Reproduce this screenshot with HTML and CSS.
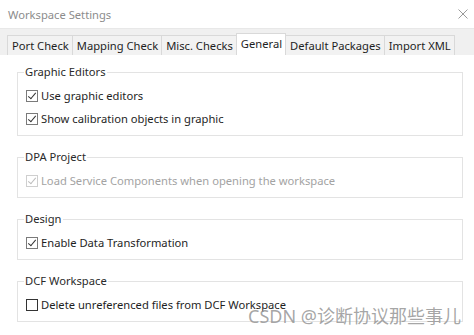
FILE: index.html
```html
<!DOCTYPE html>
<html>
<head>
<meta charset="utf-8">
<link rel="stylesheet" href="styles.css">
</head>
<body>
<div class="window">
  <div class="titlebar">
    <span class="title">Workspace Settings</span>
    <svg class="close" width="10" height="10" viewBox="0 0 10 10"><path d="M0.5 0.5L9.5 9.5M9.5 0.5L0.5 9.5" stroke="#9a9a9a" stroke-width="1" fill="none"/></svg>
  </div>
  <div class="tabstrip">
    <div class="tab">Port Check</div>
    <div class="tab">Mapping Check</div>
    <div class="tab">Misc. Checks</div>
    <div class="tab active">General</div>
    <div class="tab">Default Packages</div>
    <div class="tab">Import XML</div>
  </div>
  <div class="content">
    <fieldset class="group">
      <legend>Graphic Editors</legend>
      <div class="row"><span class="cb checked"></span><span>Use graphic editors</span></div>
      <div class="row"><span class="cb checked"></span><span>Show calibration objects in graphic</span></div>
    </fieldset>
    <fieldset class="group">
      <legend>DPA Project</legend>
      <div class="row disabled"><span class="cb checked"></span><span>Load Service Components when opening the workspace</span></div>
    </fieldset>
    <fieldset class="group">
      <legend>Design</legend>
      <div class="row"><span class="cb checked"></span><span>Enable Data Transformation</span></div>
    </fieldset>
    <fieldset class="group">
      <legend>DCF Workspace</legend>
      <div class="row"><span class="cb"></span><span>Delete unreferenced files from DCF Workspace</span></div>
    </fieldset>
  </div>
  <div class="watermark">CSDN @诊断协议那些事儿</div>
</div>
</body>
</html>
```
FILE: styles.css
```css
html, body {
  margin: 0;
  padding: 0;
  background: #ffffff;
}
body {
  font-family: "Noto Sans", "Open Sans", sans-serif;
  font-size: 11.2px;
  color: #1e1e1e;
}
.window {
  position: relative;
  width: 474px;
  height: 335px;
  overflow: hidden;
}
.titlebar {
  height: 28px;
  display: flex;
  align-items: center;
  justify-content: space-between;
  padding: 0 6px 0 8px;
  box-sizing: border-box;
}
.title {
  color: #8c8c8c;
  font-size: 11.2px;
}
.tabstrip {
  height: 27px;
  box-sizing: border-box;
  background: #f0f0f0;
  border-top: 1px solid #e8e8e8;
  display: flex;
  align-items: flex-end;
  padding-left: 7px;
}
.tab {
  height: 20px;
  box-sizing: border-box;
  border: 1px solid #d9d9d9;
  border-bottom: none;
  background: #f2f2f2;
  padding: 0 3px 0 4px;
  margin-right: -1px;
  display: flex;
  align-items: center;
  white-space: nowrap;
}
.tab.active {
  height: 22px;
  background: #ffffff;
  padding-bottom: 3px;
  position: relative;
  z-index: 1;
}
.content {
  display: flex;
  flex-direction: column;
  gap: 13px;
  padding: 9px 11px 0 17px;
}
.group {
  margin: 0;
  border: 1px solid #e3e3e3;
  padding: 4px 0 5px 8px;
}
.group legend {
  padding: 0 1px;
  margin-left: -2px;
  line-height: 16px;
  color: #2a2a2a;
}
.row {
  height: 23px;
  display: flex;
  align-items: center;
  gap: 3px;
  white-space: nowrap;
}
.row.disabled {
  color: #a3a3a3;
}
.cb {
  width: 12px;
  height: 12px;
  box-sizing: border-box;
  border: 1px solid #333333;
  background: #ffffff;
  flex: none;
  position: relative;
}
.cb.checked {
  border-color: #7a7a7a;
}
.cb.checked::after {
  content: "";
  position: absolute;
  left: 3px;
  top: 0px;
  width: 3px;
  height: 7px;
  border: solid #333333;
  border-width: 0 1px 1px 0;
  transform: rotate(40deg);
}
.row.disabled .cb {
  border-color: #cfcfcf;
}
.row.disabled .cb.checked::after {
  border-color: #bdbdbd;
}
.watermark {
  position: absolute;
  right: 13px;
  bottom: 7px;
  font-family: "Noto Sans", "Noto Sans CJK SC", sans-serif;
  font-size: 18px;
  line-height: 24px;
  color: rgba(150, 150, 150, 0.85);
  white-space: nowrap;
}
```
